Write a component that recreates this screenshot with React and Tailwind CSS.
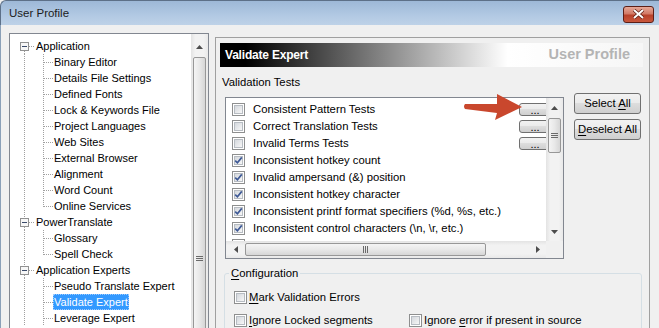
import React from "react";

const tree = [
  { label: "Application", root: true, first: true },
  { label: "Binary Editor" },
  { label: "Details File Settings" },
  { label: "Defined Fonts" },
  { label: "Lock & Keywords File" },
  { label: "Project Languages" },
  { label: "Web Sites" },
  { label: "External Browser" },
  { label: "Alignment" },
  { label: "Word Count" },
  { label: "Online Services", last: true },
  { label: "PowerTranslate", root: true },
  { label: "Glossary" },
  { label: "Spell Check", last: true },
  { label: "Application Experts", root: true },
  { label: "Pseudo Translate Expert" },
  { label: "Validate Expert", selected: true },
  { label: "Leverage Expert" },
];

const tests = [
  { label: "Consistent Pattern Tests", checked: false, more: true },
  { label: "Correct Translation Tests", checked: false, more: true },
  { label: "Invalid Terms Tests", checked: false, more: true },
  { label: "Inconsistent hotkey count", checked: true },
  { label: "Invalid ampersand (&) position", checked: true },
  { label: "Inconsistent hotkey character", checked: true },
  { label: "Inconsistent printf format specifiers (%d, %s, etc.)", checked: true },
  { label: "Inconsistent control characters (\\n, \\r, etc.)", checked: true },
  { label: "", checked: true },
];

const btn =
  "border border-[#707070] rounded-[3px] bg-[linear-gradient(to_bottom,#f2f2f2_0%,#ebebeb_45%,#dddddd_50%,#cfcfcf_100%)]";
const vThumb =
  "border border-[#979797] rounded-[2px] bg-[linear-gradient(to_right,#f4f4f4,#e8e8e8_50%,#d6d6d6)]";
const hThumb =
  "border border-[#979797] rounded-[2px] bg-[linear-gradient(to_bottom,#f4f4f4,#e8e8e8_50%,#d6d6d6)]";

const dots = { stroke: "#a0a0a0", strokeDasharray: "1 1", strokeWidth: 1 };

function TreeLines({ root, first, last }) {
  if (root) {
    return (
      <svg width="25" height="16" className="shrink-0">
        {!first && <line x1="14.5" y1="0" x2="14.5" y2="4" {...dots} />}
        <line x1="14.5" y1="13" x2="14.5" y2="16" {...dots} />
        <line x1="19" y1="8.5" x2="25" y2="8.5" {...dots} />
        <rect x="10.5" y="4.5" width="8" height="8" fill="#f7f7f7" stroke="#919191" />
        <line x1="12" y1="8.5" x2="17" y2="8.5" stroke="#3a4a6a" />
      </svg>
    );
  }
  return (
    <svg width="43" height="16" className="shrink-0">
      <line x1="14.5" y1="0" x2="14.5" y2="16" {...dots} />
      <line x1="33.5" y1="0" x2="33.5" y2={last ? 9 : 16} {...dots} />
      <line x1="34" y1="8.5" x2="43" y2="8.5" {...dots} />
    </svg>
  );
}

function Tri({ dir }) {
  const pts = {
    up: "0,4 3.5,0 7,4",
    down: "0,0 7,0 3.5,4",
    left: "4,0 4,7 0,3.5",
    right: "0,0 0,7 4,3.5",
  }[dir];
  const w = dir === "up" || dir === "down" ? 7 : 4;
  const h = dir === "up" || dir === "down" ? 4 : 7;
  return (
    <svg width={w} height={h} viewBox={`0 0 ${w} ${h}`}>
      <polygon points={pts} fill="#4d4d4d" />
    </svg>
  );
}

function Grip({ vertical }) {
  return vertical ? (
    <svg width="7" height="7">
      <line x1="0" y1="1.5" x2="7" y2="1.5" stroke="#6a6a6a" />
      <line x1="0" y1="3.5" x2="7" y2="3.5" stroke="#6a6a6a" />
      <line x1="0" y1="5.5" x2="7" y2="5.5" stroke="#6a6a6a" />
    </svg>
  ) : (
    <svg width="7" height="7">
      <line x1="1.5" y1="0" x2="1.5" y2="7" stroke="#6a6a6a" />
      <line x1="3.5" y1="0" x2="3.5" y2="7" stroke="#6a6a6a" />
      <line x1="5.5" y1="0" x2="5.5" y2="7" stroke="#6a6a6a" />
    </svg>
  );
}

function CheckBox({ checked }) {
  return (
    <span className="relative w-[13px] h-[13px] shrink-0 border border-[#8e8f8f] bg-white p-[1px] flex">
      <span className="flex-1 border border-[#b7bcc2] bg-[linear-gradient(135deg,#d4d8dd,#f7f7f7)]" />
      {checked && (
        <svg width="11" height="11" viewBox="0 0 11 11" className="absolute left-0 top-0">
          <path d="M2.2 5.6 L4.4 7.8 L8.8 2.4" fill="none" stroke="#3f5a96" strokeWidth="1.7" />
        </svg>
      )}
    </span>
  );
}

function Mn({ children }) {
  return <span className="underline underline-offset-[2px]">{children}</span>;
}

export default function App() {
  return (
    <div className="relative w-[659px] h-[328px] overflow-hidden bg-[#f0f0f0] flex flex-col font-['Liberation_Sans',Arial,sans-serif] text-black">
      {/* title bar */}
      <div className="h-[25px] shrink-0 flex items-center justify-between pl-[8px] pr-[5px] rounded-tl-[6px] border-t border-l border-[#5d7088] bg-[linear-gradient(to_bottom,#9db8d7,#b2c9e3_60%,#bed2e8)]">
        <span className="text-[11.5px] text-[#1b1b1b] pt-[2px]">User Profile</span>
        <div className="w-[31px] h-[17px] mt-[2px] rounded-[3px] border border-[#5c1f17] bg-[linear-gradient(to_bottom,#e6a898,#d27a66_45%,#b8412a_55%,#c9583d)] flex items-center justify-center">
          <svg width="13" height="10" viewBox="0 0 13 10">
            <path d="M2 1 L11 9 M11 1 L2 9" stroke="#5a1b10" strokeWidth="3.4" />
            <path d="M2 1 L11 9 M11 1 L2 9" stroke="#ffffff" strokeWidth="2" />
          </svg>
        </div>
      </div>

      {/* body */}
      <div className="flex-1 flex pl-[8px] pt-[8px] border-l border-[#8aa0b8] min-h-0">
        {/* tree */}
        <div className="w-[200px] h-[400px] shrink-0 border border-[#828790] bg-white flex">
          <div className="flex-1 pt-[4px] text-[11px] leading-[16px] whitespace-nowrap overflow-hidden">
            {tree.map((t) => (
              <div key={t.label} className="h-[16px] flex items-center">
                <TreeLines root={t.root} first={t.first} last={t.last} />
                <span
                  className={
                    t.selected
                      ? "px-[1px] bg-[#3399ff] text-white outline-1 outline-dotted outline-[#9ccaff] -outline-offset-1"
                      : "px-[1px]"
                  }
                >
                  {t.label}
                </span>
              </div>
            ))}
          </div>
          <div className="w-[17px] shrink-0 flex flex-col items-center overflow-hidden bg-[linear-gradient(to_right,#e3e3e3,#f2f2f2_25%,#f2f2f2_75%,#e9e9e9)]">
            <div className="h-[23px] shrink-0 flex items-center justify-center pt-[2px]">
              <Tri dir="up" />
            </div>
            <div className={`w-[13px] h-[402px] shrink-0 ${vThumb} flex items-center justify-center`}>
              <Grip vertical />
            </div>
          </div>
        </div>

        {/* right panel */}
        <div className="ml-[6px] mt-[4px] w-[435px] h-[400px] shrink-0 border border-[#a0a0a0] flex flex-col">
          <div className="mt-[5px] ml-[4px] mr-[6px] h-[24px] shrink-0 flex items-center justify-between pl-[5px] pr-[13px] bg-[linear-gradient(to_right,#000_0%,#000_6%,#ffffff_68%,#f6f6f6_100%)]">
            <span className="text-[12px] font-bold text-white tracking-[-0.2px]">Validate Expert</span>
            <span className="text-[14.5px] font-bold text-[#b4b4b4]">User Profile</span>
          </div>

          <div className="ml-[6px] mt-[7px] h-[16px] leading-[16px] text-[11.3px]">Validation Tests</div>

          <div className="mt-[3px] flex text-[11.3px]">
            {/* list box */}
            <div className="ml-[9px] mt-[4px] w-[339px] h-[162px] shrink-0 border border-[#828790] bg-white flex flex-col">
              <div className="h-[143px] flex">
                <div className="flex-1 overflow-hidden pt-[3px]">
                  {tests.map((t, i) => (
                    <div key={i} className="h-[17px] flex items-center pl-[6px] gap-[8px] whitespace-nowrap">
                      <CheckBox checked={t.checked} />
                      <span>{t.label}</span>
                      {t.more && (
                        <div className={`ml-auto mr-[-5px] w-[32px] h-[13px] shrink-0 ${btn} flex items-end justify-center leading-[10px] text-[11px]`}>
                          ...
                        </div>
                      )}
                    </div>
                  ))}
                </div>
                <div className="w-[17px] shrink-0 flex flex-col items-center bg-[linear-gradient(to_right,#e3e3e3,#f2f2f2_25%,#f2f2f2_75%,#e9e9e9)]">
                  <div className="h-[19px] shrink-0 flex items-center justify-center">
                    <Tri dir="up" />
                  </div>
                  <div className={`mt-[1px] w-[13px] h-[35px] shrink-0 ${vThumb} flex items-center justify-center`}>
                    <Grip vertical />
                  </div>
                  <div className="flex-1" />
                  <div className="h-[19px] shrink-0 flex items-center justify-center">
                    <Tri dir="down" />
                  </div>
                </div>
              </div>
              <div className="h-[17px] flex">
                <div className="flex-1 flex items-center bg-[linear-gradient(to_bottom,#e3e3e3,#f2f2f2_25%,#f2f2f2_75%,#e9e9e9)]">
                  <div className="w-[19px] shrink-0 flex items-center justify-center">
                    <Tri dir="left" />
                  </div>
                  <div className={`w-[241px] h-[13px] shrink-0 ${hThumb} flex items-center justify-center`}>
                    <Grip />
                  </div>
                  <div className="flex-1" />
                  <div className="w-[17px] shrink-0 flex items-center justify-center">
                    <Tri dir="right" />
                  </div>
                </div>
                <div className="w-[17px] shrink-0 bg-[#f0f0f0]" />
              </div>
            </div>

            {/* buttons */}
            <div className="ml-[10px] flex flex-col gap-[5px]">
              <div className={`w-[67px] h-[21px] ${btn} flex items-center justify-center`}>
                <span>
                  Select <Mn>A</Mn>ll
                </span>
              </div>
              <div className={`w-[67px] h-[21px] ${btn} flex items-center justify-center`}>
                <span>
                  <Mn>D</Mn>eselect All
                </span>
              </div>
            </div>
          </div>

          {/* configuration */}
          <fieldset className="mt-[6px] ml-[8px] mr-[7px] h-[120px] shrink-0 border border-[#d5dfe5] rounded-[3px] text-[11.3px]">
            <legend className="ml-[4px] px-[2px] leading-[16px]">
              <Mn>C</Mn>onfiguration
            </legend>
            <div className="pl-[9px]">
              <div className="mt-[8px] h-[16px] flex items-center gap-[2px]">
                <CheckBox />
                <span>
                  <Mn>M</Mn>ark Validation Errors
                </span>
              </div>
              <div className="mt-[7px] h-[16px] flex items-center">
                <div className="w-[175px] flex items-center gap-[2px]">
                  <CheckBox />
                  <span>
                    <Mn>I</Mn>gnore Locked segments
                  </span>
                </div>
                <div className="flex items-center gap-[2px]">
                  <CheckBox />
                  <span>
                    Ignore <Mn>e</Mn>rror if present in source
                  </span>
                </div>
              </div>
            </div>
          </fieldset>
        </div>
      </div>

      {/* callout arrow */}
      <svg width="62" height="30" viewBox="0 0 62 30" className="absolute left-[462px] top-[92px]">
        <path d="M3 12 L35 12 L35 2 L60 15 L33 28 L35 21 L3 17 Q1 14.5 3 12 Z" fill="#c9472d" />
      </svg>
    </div>
  );
}
